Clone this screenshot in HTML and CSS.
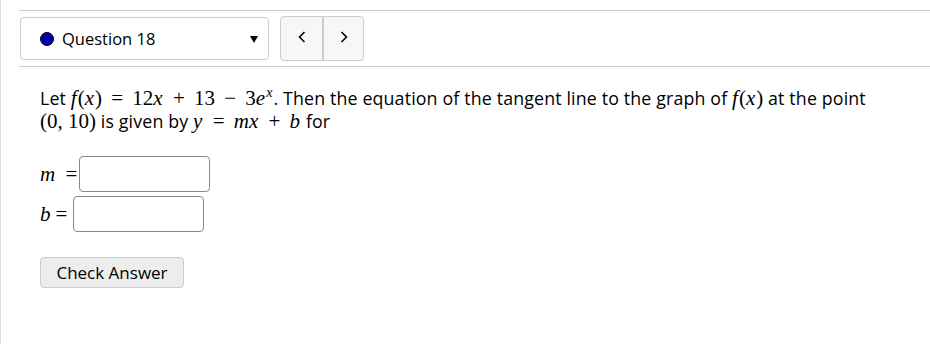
FILE: index.html
```html
<!DOCTYPE html>
<html lang="en">
<head>
    <meta charset="UTF-8">
    <title>Question 18</title>
    <link rel="stylesheet" href="styles.css">
</head>
<body>
    <div class="sheet">
        <!-- Barra de navegación de preguntas -->
        <div class="nav-bar">
            <div class="question-select">
                <span class="dot"></span>
                <span class="q-label">Question 18</span>
                <span class="caret"></span>
            </div>
            <div class="nav-buttons">
                <button class="nav-btn" type="button" aria-label="Previous">
                    <svg width="8" height="12" viewBox="0 0 8 12"><polyline points="6.5,1 1.5,6 6.5,11" fill="none" stroke="#000" stroke-width="1.6"/></svg>
                </button>
                <button class="nav-btn" type="button" aria-label="Next">
                    <svg width="8" height="12" viewBox="0 0 8 12"><polyline points="1.5,1 6.5,6 1.5,11" fill="none" stroke="#000" stroke-width="1.6"/></svg>
                </button>
            </div>
        </div>

        <!-- Enunciado -->
        <div class="question">
            <p class="prompt">
                Let <span class="m"><i>f</i>(<i>x</i>) <span class="op">=</span> 12<i>x</i> <span class="op">+</span> 13 <span class="op">&minus;</span> 3<i>e</i><sup><i>x</i></sup></span>. Then the equation of the tangent line to the graph of <span class="m"><i>f</i>(<i>x</i>)</span> at the point <span class="m">(0, 10)</span> is given by <span class="m"><i>y</i> <span class="op">=</span> <i>mx</i> <span class="op">+</span> <i>b</i></span> for
            </p>

            <div class="answer-row">
                <span class="m"><i>m</i> <span class="op tight">=</span></span><input type="text" class="answer">
            </div>
            <div class="answer-row">
                <span class="m"><i>b</i><span class="op">=</span></span><input type="text" class="answer">
            </div>

            <button class="check-btn" type="button">Check Answer</button>
        </div>
    </div>
</body>
</html>
```

FILE: styles.css
```css
body {
    margin: 0;
    font-family: "Open Sans", sans-serif;
    font-size: 17px;
    color: #000;
    background: #fff;
}
.sheet {
    border-left: 1px solid #ddd;
    min-height: 344px;
    box-sizing: border-box;
    padding: 10px 0 0 18px;
}

/* Barra superior */
.nav-bar {
    display: flex;
    align-items: center;
    gap: 11px;
    border-top: 1px solid #ccc;
    border-bottom: 1px solid #ccc;
    padding: 5px 0 5px 1px;
}
.question-select {
    display: flex;
    align-items: center;
    width: 249px;
    height: 43px;
    box-sizing: border-box;
    border: 1px solid #ccc;
    border-radius: 4px;
    padding: 0 10px 0 19px;
}
.dot {
    width: 12px;
    height: 12px;
    border: 1px solid #000;
    border-radius: 50%;
    background: #0000a8;
    margin-right: 8px;
}
.q-label {
    flex: 1;
    font-size: 16.5px;
}
.caret {
    width: 0;
    height: 0;
    border-left: 4.5px solid transparent;
    border-right: 4.5px solid transparent;
    border-top: 7px solid #000;
    margin-top: 2px;
}
.nav-buttons {
    display: flex;
    height: 43px;
    border: 1px solid #ccc;
    border-radius: 4px;
    background: #f7f7f7;
    overflow: hidden;
}
.nav-btn {
    display: flex;
    align-items: center;
    justify-content: center;
    width: 41px;
    border: none;
    background: none;
    padding: 0 0 3px;
}
.nav-btn + .nav-btn {
    border-left: 2px solid #ccc;
}

/* Pregunta */
.question {
    padding: 20px 0 0 21px;
}
.prompt {
    margin: 0;
    line-height: 23px;
    width: 850px;
    font-size: 17.8px;
    letter-spacing: 0.15px;
}
.m {
    font-family: "Liberation Serif", "DejaVu Serif", serif;
    font-size: 21px;
    line-height: 20px;
    letter-spacing: 0;
    white-space: nowrap;
}
.m i {
    padding-right: 1px;
}
.m sup {
    font-size: 14px;
    line-height: 0;
}
.op {
    padding: 0 4px;
}
.op.tight {
    padding-right: 0;
}
.answer-row {
    display: flex;
    align-items: center;
    margin-top: 4px;
}
.answer-row:first-of-type {
    margin-top: 23px;
}
.answer {
    width: 131px;
    height: 36px;
    box-sizing: border-box;
    border: 1px solid #888;
    border-radius: 4px;
    margin-left: 2px;
}
.check-btn {
    margin-top: 25px;
    width: 144px;
    height: 31px;
    border: 1px solid #ccc;
    border-radius: 4px;
    background: #ededed;
    font-family: inherit;
    font-size: 17px;
    color: #000;
}
```
